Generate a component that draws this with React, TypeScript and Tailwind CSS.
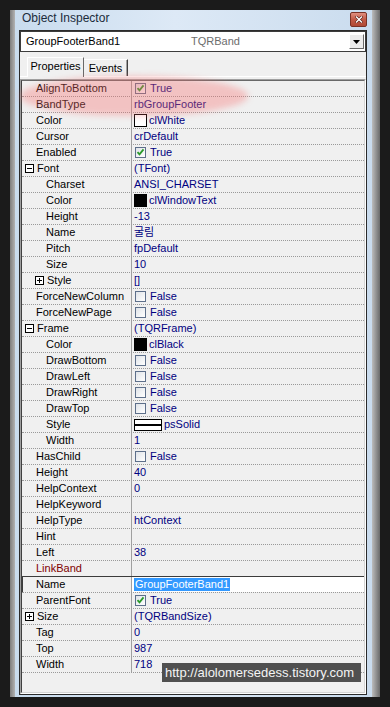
import clsx from 'clsx'

type Value =
  | { kind: 'text'; text: string }
  | { kind: 'check'; on: boolean }
  | { kind: 'swatch'; fill: 'white' | 'black'; text: string }
  | { kind: 'pen'; text: string }
  | { kind: 'selected'; text: string }
  | { kind: 'empty' }

interface Prop {
  name: string
  child?: boolean
  box?: '+' | '-'
  maroon?: boolean
  value: Value
}

const t = (text: string): Value => ({ kind: 'text', text })
const check = (on: boolean): Value => ({ kind: 'check', on })

const rows: Prop[] = [
  { name: 'AlignToBottom', value: check(true) },
  { name: 'BandType', value: t('rbGroupFooter') },
  { name: 'Color', value: { kind: 'swatch', fill: 'white', text: 'clWhite' } },
  { name: 'Cursor', value: t('crDefault') },
  { name: 'Enabled', value: check(true) },
  { name: 'Font', box: '-', value: t('(TFont)') },
  { name: 'Charset', child: true, value: t('ANSI_CHARSET') },
  { name: 'Color', child: true, value: { kind: 'swatch', fill: 'black', text: 'clWindowText' } },
  { name: 'Height', child: true, value: t('-13') },
  { name: 'Name', child: true, value: t('굴림') },
  { name: 'Pitch', child: true, value: t('fpDefault') },
  { name: 'Size', child: true, value: t('10') },
  { name: 'Style', child: true, box: '+', value: t('[]') },
  { name: 'ForceNewColumn', value: check(false) },
  { name: 'ForceNewPage', value: check(false) },
  { name: 'Frame', box: '-', value: t('(TQRFrame)') },
  { name: 'Color', child: true, value: { kind: 'swatch', fill: 'black', text: 'clBlack' } },
  { name: 'DrawBottom', child: true, value: check(false) },
  { name: 'DrawLeft', child: true, value: check(false) },
  { name: 'DrawRight', child: true, value: check(false) },
  { name: 'DrawTop', child: true, value: check(false) },
  { name: 'Style', child: true, value: { kind: 'pen', text: 'psSolid' } },
  { name: 'Width', child: true, value: t('1') },
  { name: 'HasChild', value: check(false) },
  { name: 'Height', value: t('40') },
  { name: 'HelpContext', value: t('0') },
  { name: 'HelpKeyword', value: { kind: 'empty' } },
  { name: 'HelpType', value: t('htContext') },
  { name: 'Hint', value: { kind: 'empty' } },
  { name: 'Left', value: t('38') },
  { name: 'LinkBand', maroon: true, value: { kind: 'empty' } },
  { name: 'Name', value: { kind: 'selected', text: 'GroupFooterBand1' } },
  { name: 'ParentFont', value: check(true) },
  { name: 'Size', box: '+', value: t('(TQRBandSize)') },
  { name: 'Tag', value: t('0') },
  { name: 'Top', value: t('987') },
  { name: 'Width', value: t('718') },
]

function ExpandBox({ sign }: { sign: '+' | '-' }) {
  return (
    <svg width="9" height="9" viewBox="0 0 9 9" className="mr-[3px] shrink-0">
      <rect x="0.5" y="0.5" width="8" height="8" fill="#fff" stroke="#000" />
      <path d="M2 4.5h5" stroke="#000" />
      {sign === '+' && <path d="M4.5 2v5" stroke="#000" />}
    </svg>
  )
}

function CheckBox({ on }: { on: boolean }) {
  return (
    <span className="ml-[1px] mr-[4px] flex h-[11px] w-[11px] shrink-0 items-center justify-center border border-[#5d6f8a] bg-[linear-gradient(135deg,#dfe3e8,#ffffff)]">
      {on && (
        <svg width="9" height="9" viewBox="0 0 9 9">
          <path d="M1.5 4.2l2 2.2 4-5" fill="none" stroke="#2a9a2a" strokeWidth="1.8" />
        </svg>
      )}
    </span>
  )
}

function ValueCell({ value }: { value: Value }) {
  switch (value.kind) {
    case 'text':
      return <span>{value.text}</span>
    case 'check':
      return (
        <>
          <CheckBox on={value.on} />
          <span>{value.on ? 'True' : 'False'}</span>
        </>
      )
    case 'swatch':
      return (
        <>
          <span
            className={clsx(
              'mr-[2px] h-[13px] w-[13px] shrink-0 border border-black',
              value.fill === 'white' ? 'bg-white' : 'bg-black',
            )}
          />
          <span>{value.text}</span>
        </>
      )
    case 'pen':
      return (
        <>
          <span className="mr-[2px] flex h-[12px] w-[28px] shrink-0 items-center border border-black bg-white">
            <span className="h-[2px] w-full bg-black" />
          </span>
          <span>{value.text}</span>
        </>
      )
    case 'selected':
      return <span className="bg-[#3399ff] px-[1px] leading-[13px] text-white">{value.text}</span>
    default:
      return null
  }
}

function namePadding(row: Prop) {
  if (row.child) return row.box ? 'pl-[13px]' : 'pl-[24px]'
  return row.box ? 'pl-[3px]' : 'pl-[14px]'
}

function PropRow({ row, beforeSelected }: { row: Prop; beforeSelected: boolean }) {
  const selected = row.value.kind === 'selected'
  return (
    <div
      className={clsx(
        'flex h-[16px] border-b',
        beforeSelected ? 'border-solid border-[#3c3c3c]' : 'border-dotted border-[#9a9a9a]',
      )}
    >
      <div
        className={clsx(
          'flex w-[110px] shrink-0 items-center border-r border-[#a0a0a0]',
          namePadding(row),
          row.maroon ? 'text-[#800000]' : 'text-black',
          selected && 'shadow-[inset_1px_0_0_#3c3c3c]',
        )}
      >
        {row.box && <ExpandBox sign={row.box} />}
        <span>{row.name}</span>
      </div>
      <div className={clsx('flex flex-1 items-center pl-[2px] text-[#000080]', selected && 'bg-white')}>
        <ValueCell value={row.value} />
      </div>
    </div>
  )
}

function CloseButton() {
  return (
    <div className="mt-[2px] flex h-[15px] w-[17px] items-center justify-center rounded-[2px] border border-[#7a3226] bg-[linear-gradient(to_bottom,#e09080,#c25a46_50%,#b04a36)]">
      <svg width="8" height="7" viewBox="0 0 8 7">
        <path d="M1.5 1l5 5M6.5 1l-5 5" stroke="#5a2018" strokeWidth="2.6" strokeLinecap="square" />
        <path d="M1.5 1l5 5M6.5 1l-5 5" stroke="#fff" strokeWidth="1.4" strokeLinecap="square" />
      </svg>
    </div>
  )
}

export default function App() {
  const selectedIndex = rows.findIndex((r) => r.value.kind === 'selected')

  return (
    <div className="relative flex h-[707px] w-[390px] overflow-hidden bg-[#1b1b1b] px-[10px] pb-[10px] pt-[10px] font-['Liberation_Sans','Noto_Sans_CJK_KR',sans-serif] text-[11px] leading-[15px]">
      {/* Rand eines Fensters dahinter */}
      <div className="w-[5px] shrink-0 bg-[linear-gradient(to_right,#7e7e7e,#b2b2b2)]" />

      <div className="flex min-w-0 flex-1 flex-col bg-[linear-gradient(to_right,#c9dcee,#dde9f6_45%,#cadcee)] pb-[2px] pl-[4px] pr-[5px]">
        <div className="flex h-[20px] shrink-0 items-start justify-between">
          <span className="pl-[3px] pt-[1px] text-[12px] leading-[15px] text-[#1b2b3b]">Object Inspector</span>
          <CloseButton />
        </div>

        <div className="flex min-h-0 flex-1 flex-col border border-[#2b2b2b] bg-[#f0f0f0]">
          {/* Komponenten-Auswahl */}
          <div className="flex h-[21px] shrink-0 items-center border border-[#3c3c3c] bg-white pr-[1px] text-[11px]">
            <span className="w-[170px] shrink-0 pl-[5px] text-black">GroupFooterBand1</span>
            <span className="flex-1 text-[#6d6d6d]">TQRBand</span>
            <span className="flex h-[15px] w-[15px] items-center justify-center border border-b-[#696969] border-l-white border-r-[#696969] border-t-white bg-[#ececec]">
              <svg width="7" height="4" viewBox="0 0 7 4">
                <path d="M0 0h7L3.5 4z" fill="#000" />
              </svg>
            </span>
          </div>

          {/* Reiter */}
          <div className="mt-[3px] flex h-[22px] shrink-0 items-end border-b border-white pl-[7px]">
            <div className="-mb-[1px] flex h-[20px] w-[57px] items-start justify-center border-l border-r border-t border-l-white border-r-[#696969] border-t-white bg-[#f0f0f0] pt-[2px] leading-[13px] text-black">
              Properties
            </div>
            <div className="flex h-[17px] w-[44px] items-start justify-center border-r border-t border-r-[#404040] border-t-white pt-[2px] leading-[13px] text-black shadow-[inset_-1px_0_0_#a0a0a0]">
              Events
            </div>
          </div>

          <div className="flex min-h-0 flex-1 flex-col pt-[2px]">
            <div className="flex min-h-0 flex-1 flex-col border border-b-white border-l-[#a0a0a0] border-r-white border-t-[#a0a0a0]">
              <div className="min-h-0 flex-1 border border-b-[#d4d4d4] border-l-[#404040] border-r-[#d4d4d4] border-t-[#696969]">
                {rows.map((row, i) => (
                  <PropRow key={i} row={row} beforeSelected={i === selectedIndex - 1} />
                ))}
              </div>
            </div>
          </div>
        </div>
      </div>

      <div className="w-[8px] shrink-0 bg-[linear-gradient(to_right,#bcbcbc,#6a6a6a)]" />

      {/* Markierung über den ersten beiden Zeilen */}
      <div className="pointer-events-none absolute left-[20px] top-[76px] h-[40px] w-[228px] rounded-[50%] bg-[#f56e6e]/35 blur-[3px]" />

      {/* Wasserzeichen */}
      <div className="absolute left-[162px] top-[663px] flex h-[19px] w-[199px] items-center bg-[#505050] pl-[3px] text-[13px] text-[#f4f4f4]">
        http://alolomersedess.tistory.com
      </div>
    </div>
  )
}
